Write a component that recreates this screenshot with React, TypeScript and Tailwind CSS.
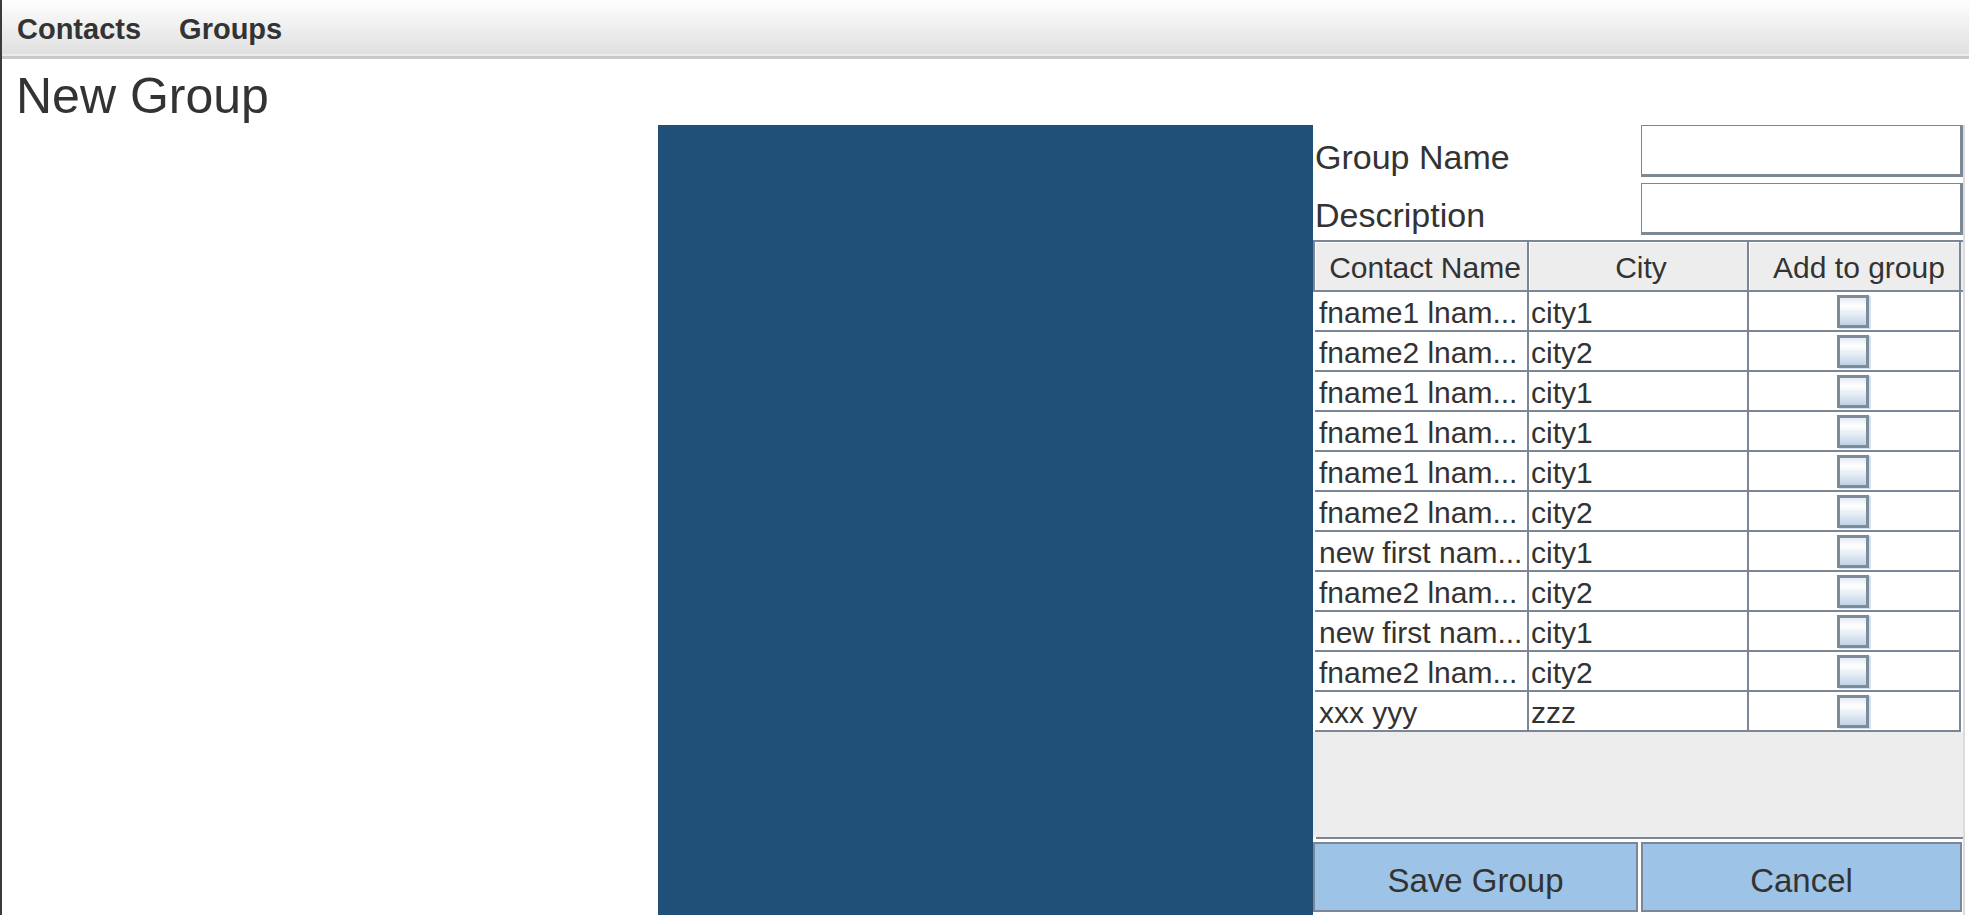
import React from "react";

const rows: [string, string][] = [
  ["fname1 lnam...", "city1"],
  ["fname2 lnam...", "city2"],
  ["fname1 lnam...", "city1"],
  ["fname1 lnam...", "city1"],
  ["fname1 lnam...", "city1"],
  ["fname2 lnam...", "city2"],
  ["new first nam...", "city1"],
  ["fname2 lnam...", "city2"],
  ["new first nam...", "city1"],
  ["fname2 lnam...", "city2"],
  ["xxx yyy", "zzz"],
];

function CheckBox() {
  return (
    <div className="w-[32px] h-[33px] border-[3px] border-[#7d8a98] bg-gradient-to-b from-[#e4ebf4] via-white via-30% to-[#c1d3e8] shadow-[2px_1px_0_#d4e2f0]" />
  );
}

export default function App() {
  return (
    <div
      className="w-[1969px] h-[915px] overflow-hidden bg-white border-l-2 border-[#3b3b3b] flex flex-col text-[#333333]"
      style={{ fontFamily: '"Liberation Sans", Arial, sans-serif' }}
    >
      {/* Menu bar */}
      <div className="flex flex-col shrink-0">
        <div className="h-[54px] bg-gradient-to-b from-[#fefefe] to-[#e0e0e0] flex pl-[15px] gap-[38px] pt-[4px] text-[29px] font-bold leading-[50px]">
          <span>Contacts</span>
          <span>Groups</span>
        </div>
        <div className="h-[2px] bg-[#ececec]" />
        <div className="h-[3px] bg-[#c9c9c9]" />
      </div>

      {/* Title */}
      <div className="pl-[14px] pt-[8px] text-[50px] leading-[58px] h-[66px] shrink-0">New Group</div>

      {/* Main */}
      <div className="flex flex-1 min-h-0">
        <div className="w-[656px] shrink-0" />
        <div className="w-[655px] shrink-0 bg-[#204f77]" />

        {/* Right panel */}
        <div className="w-[650px] shrink-0 flex flex-col">
          <div className="flex h-[52px] shrink-0">
            <div className="flex-1 pl-[2px] pt-[13px] text-[34px] leading-[38px] whitespace-nowrap">Group Name</div>
            <div className="w-[322px] border-t border-l border-r-[3px] border-b-[3px] border-[#7d8896] bg-white" />
          </div>
          <div className="h-[6px] shrink-0" />
          <div className="flex h-[52px] shrink-0">
            <div className="flex-1 pl-[2px] pt-[13px] text-[34px] leading-[38px] whitespace-nowrap">Description</div>
            <div className="w-[322px] border-t border-l border-r-[3px] border-b-[3px] border-[#7d8896] bg-white" />
          </div>
          <div className="h-[5px] shrink-0" />

          {/* Table */}
          <div className="flex flex-col shrink-0 text-[30px]">
            <div className="flex h-[52px] border-t-2 border-b-2 border-l-2 border-[#7b8796] bg-[#ededed]">
              <div className="w-[214px] border-r-2 border-[#7b8796] shadow-[inset_1px_1px_0_#ffffff] text-center pl-[8px] pt-[2px] leading-[48px]">
                Contact Name
              </div>
              <div className="w-[220px] border-r-2 border-[#7b8796] shadow-[inset_1px_1px_0_#ffffff] text-center pl-[6px] pt-[2px] leading-[48px]">
                City
              </div>
              <div className="w-[212px] border-r-2 border-[#7b8796] shadow-[inset_1px_1px_0_#ffffff] text-center pl-[10px] pt-[2px] leading-[48px]">
                Add to group
              </div>
            </div>
            {rows.map(([name, city], i) => (
              <div key={i} className="flex h-[40px] border-b-2 border-[#7b8796] bg-white ml-[2px] w-[646px]">
                <div className="w-[214px] border-r-2 border-[#7b8796] pl-[4px] pt-[3px] leading-[36px] whitespace-nowrap overflow-hidden">
                  {name}
                </div>
                <div className="w-[220px] border-r-2 border-[#7b8796] pl-[2px] pt-[3px] leading-[36px] whitespace-nowrap overflow-hidden">
                  {city}
                </div>
                <div className="w-[212px] border-r-2 border-[#7b8796] flex items-center justify-center pr-[2px]">
                  <CheckBox />
                </div>
              </div>
            ))}
          </div>

          <div className="flex-1 bg-[#ededed]" />
          <div className="h-[2px] bg-[#7b8796] ml-[3px] shrink-0" />
          <div className="h-[3px] shrink-0" />
          <div className="flex h-[70px] shrink-0 gap-[3px] text-[33px]">
            <div className="w-[325px] bg-[#9dc3e6] border-2 border-[#7b8796] flex items-center justify-center pt-[8px]">
              Save Group
            </div>
            <div className="w-[321px] bg-[#9dc3e6] border-2 border-[#7b8796] flex items-center justify-center pt-[8px]">
              Cancel
            </div>
          </div>
          <div className="h-[3px] shrink-0" />
        </div>

        <div className="w-[6px] shrink-0 border-l-2 border-[#dcdcdc] bg-white" />
      </div>
    </div>
  );
}
